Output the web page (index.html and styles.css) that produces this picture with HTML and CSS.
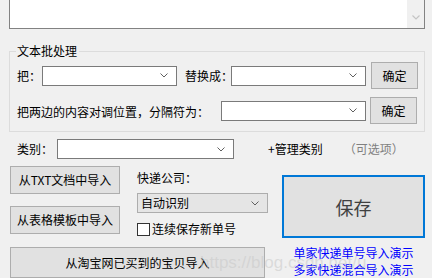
FILE: index.html
```html
<!DOCTYPE html>
<html lang="zh-CN">
<head>
<meta charset="utf-8">
<link rel="stylesheet" href="styles.css">
</head>
<body>
<div class="win">
  <div class="memo">
    <div class="memo-sb">
      <svg class="chev" width="8" height="5" viewBox="0 0 8 5"><polyline points="0.5,0.5 4,4 7.5,0.5" fill="none" stroke="#c4c4c4" stroke-width="1.2"/></svg>
    </div>
  </div>

  <fieldset class="group">
    <legend>文本批处理</legend>
    <div class="row r1">
      <span class="lbl l-ba">把：</span>
      <div class="combo c1"><svg class="chev" width="8" height="5" viewBox="0 0 8 5"><polyline points="0.5,0.5 4,4 7.5,0.5" fill="none" stroke="#606060" stroke-width="1"/></svg></div>
      <span class="lbl l-th">替换成：</span>
      <div class="combo c2"><svg class="chev" width="8" height="5" viewBox="0 0 8 5"><polyline points="0.5,0.5 4,4 7.5,0.5" fill="none" stroke="#606060" stroke-width="1"/></svg></div>
      <button class="btn ok">确定</button>
    </div>
    <div class="row r2">
      <span class="lbl l-sw">把两边的内容对调位置，分隔符为：</span>
      <div class="combo c3"><svg class="chev" width="8" height="5" viewBox="0 0 8 5"><polyline points="0.5,0.5 4,4 7.5,0.5" fill="none" stroke="#606060" stroke-width="1"/></svg></div>
      <button class="btn ok ok2">确定</button>
    </div>
  </fieldset>

  <div class="row cat">
    <span class="lbl l-cat">类别：</span>
    <div class="combo c4"><svg class="chev" width="8" height="5" viewBox="0 0 8 5"><polyline points="0.5,0.5 4,4 7.5,0.5" fill="none" stroke="#606060" stroke-width="1"/></svg></div>
    <span class="manage">+管理类别</span>
    <span class="opt">（可选项）</span>
  </div>

  <div class="bottom">
    <div class="bl">
      <div class="bl-top">
        <div class="imp">
          <button class="btn imp-btn">从TXT文档中导入</button>
          <button class="btn imp-btn imp2">从表格模板中导入</button>
        </div>
        <div class="mid">
          <span class="lbl kd">快递公司：</span>
          <div class="combo sel">
            <span>自动识别</span>
            <svg class="chev" width="8" height="5" viewBox="0 0 8 5"><polyline points="0.5,0.5 4,4 7.5,0.5" fill="none" stroke="#606060" stroke-width="1"/></svg>
          </div>
          <label class="chk"><span class="box"></span><span>连续保存新单号</span></label>
        </div>
      </div>
      <button class="btn wide">从淘宝网已买到的宝贝导入</button>
    </div>
    <div class="br">
      <button class="save">保存</button>
      <a class="lnk">单家快递单号导入演示</a>
      <a class="lnk">多家快递混合导入演示</a>
    </div>
  </div>

  <div class="wm">https://blog.csdn.net/u</div>
</div>
</body>
</html>
```

FILE: styles.css
```css
* { box-sizing: border-box; }
html, body { margin: 0; padding: 0; }
body {
  width: 432px;
  height: 278px;
  overflow: hidden;
  background: #f0f0f0;
  font-family: "Noto Sans CJK SC", "Microsoft YaHei", sans-serif;
  font-size: 12px;
  color: #000;
}
.win {
  position: relative;
  width: 432px;
  height: 278px;
  background: #f0f0f0;
}

.memo {
  margin-left: 9px;
  width: 416px;
  height: 29px;
  background: #fff;
  border: 1px solid #828282;
  border-top: none;
  display: flex;
  justify-content: flex-end;
}
.memo-sb {
  width: 17px;
  background: #f0f0f0;
  display: flex;
  justify-content: center;
  padding-top: 15px;
}

.group {
  margin: 14px 0 0 9px;
  width: 416px;
  height: 89px;
  border: 1px solid #dcdcdc;
  padding: 3px 6px 0 6px;
  min-width: 0;
}
.group legend {
  padding: 0 2px 0 1px;
  line-height: 16px;
  height: 16px;
}

.row { display: flex; align-items: center; }
.lbl { line-height: 16px; white-space: nowrap; }
.r1 { height: 27px; padding-left: 1px; }
.r2 { height: 27px; margin-top: 8px; padding-left: 1px; }
.r2 .lbl { padding-top: 2px; }

.l-ba { width: 25px; }
.l-th { width: 46px; margin-left: 8px; }
.l-sw { width: 204px; }

.combo {
  height: 20px;
  background: #fff;
  border: 1px solid #7a7a7a;
  display: flex;
  align-items: center;
  justify-content: flex-end;
  padding-right: 8px;
}
.chev { display: block; }
.c1 { width: 135px; }
.c2 { width: 135px; }
.c3 { width: 145px; }

.btn {
  font-family: inherit;
  font-size: 12px;
  color: #000;
  background: #e1e1e1;
  border: 1px solid #adadad;
  padding: 0;
  margin: 0;
  line-height: 16px;
}
.ok { width: 47px; height: 27px; margin-left: 5px; }
.ok2 { margin-left: 4px; }

.cat { height: 20px; margin-top: 7px; }
.l-cat { width: 40px; margin-left: 17px; }
.c4 { width: 177px; }
.manage { margin-left: 34px; line-height: 16px; }
.opt { margin-left: 21px; color: #808080; line-height: 16px; }

.bottom {
  display: flex;
  margin-top: 7px;
}
.bl { margin-left: 10px; width: 255px; display: flex; flex-direction: column; }
.bl-top { display: flex; }
.imp { display: flex; flex-direction: column; width: 110px; }
.imp-btn { width: 110px; height: 28px; }
.imp2 { margin-top: 12px; }
.mid {
  margin-left: 17px;
  width: 131px;
  display: flex;
  flex-direction: column;
}
.kd { margin-top: 4px; }
.sel {
  margin-top: 7px;
  background: #e5e5e5;
  border-color: #adadad;
  justify-content: space-between;
  padding-left: 3px;
  width: 131px;
}
.sel span { line-height: 16px; }
.chk {
  margin-top: 8px;
  display: flex;
  align-items: center;
  line-height: 16px;
}
.box {
  width: 13px;
  height: 13px;
  border: 1px solid #333;
  background: #fff;
  margin-right: 2px;
}
.wide { width: 255px; height: 31px; margin-top: 10px; }

.br {
  margin-left: 17px;
  width: 143px;
  display: flex;
  flex-direction: column;
  align-items: center;
}
.save {
  margin-top: 9px;
  width: 143px;
  height: 63px;
  background: #e1e1e1;
  border: 2px solid #0078d7;
  font-family: "Noto Sans CJK SC", sans-serif;
  font-size: 18px;
  color: #404040;
  padding: 0;
}
.lnk {
  color: #0000ff;
  line-height: 17px;
  white-space: nowrap;
}
.save + .lnk { margin-top: 6px; }

.wm {
  position: absolute;
  left: 200px;
  top: 253px;
  font-family: "Liberation Sans", sans-serif;
  font-size: 17px;
  color: rgba(200, 200, 200, 0.55);
  white-space: nowrap;
  pointer-events: none;
}
```
